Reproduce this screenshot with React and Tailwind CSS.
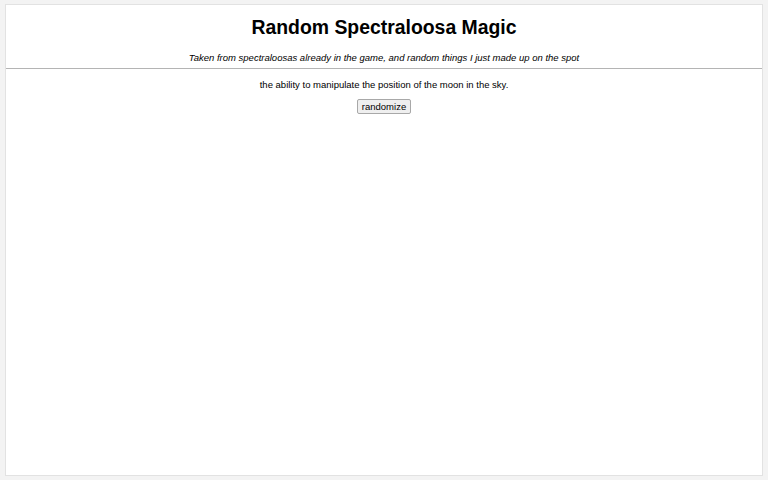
export default function App() {
  return (
    <div className="h-[480px] bg-[#f3f3f3] px-[5px] pt-[4px] pb-[4px] font-['Liberation_Sans',Arial,sans-serif] text-black">
      <div className="h-full bg-white border border-[#e2e2e2] flex flex-col items-center">
        <h1 className="mt-[11px] text-[19.4px] leading-[23px] font-bold">Random Spectraloosa Magic</h1>
        <p className="mt-[13px] text-[9.5px] leading-[12px] italic">
          Taken from spectraloosas already in the game, and random things I just made up on the spot
        </p>
        <hr className="w-full mt-[4px] border-0 border-t border-[#b4b4b4]" />
        <p className="mt-[10px] text-[9.5px] leading-[12px]">
          the ability to manipulate the position of the moon in the sky.
        </p>
        <button className="mt-[8px] h-[15px] px-[4px] text-[9.5px] leading-[12px] bg-[#efefef] border border-[#a8a8a8] rounded-[2px]">
          randomize
        </button>
      </div>
    </div>
  );
}
